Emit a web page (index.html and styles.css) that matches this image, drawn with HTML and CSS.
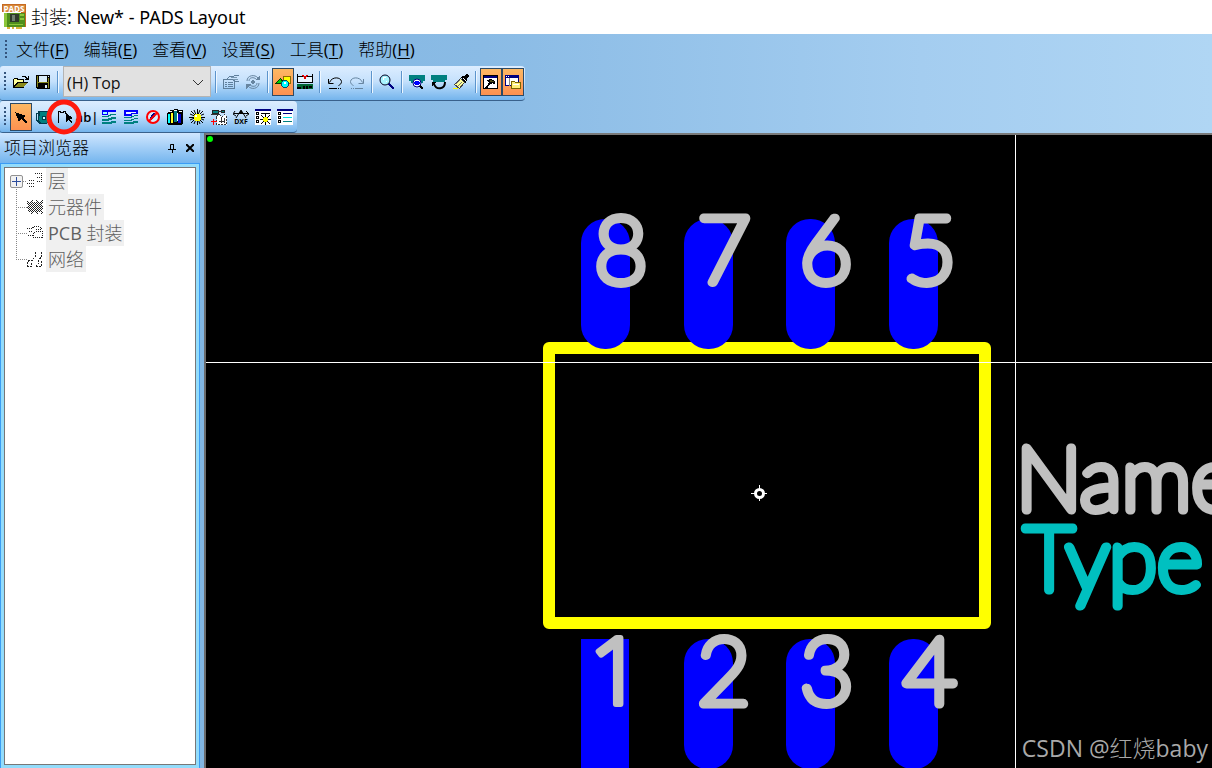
FILE: index.html
```
<!DOCTYPE html>
<html lang="zh-CN">
<head>
    <meta charset="UTF-8">
    <title>封装: New* - PADS Layout</title>
    <link rel="stylesheet" href="styles.css">
</head>
<body>
<div class="app">
    <header class="titlebar">
        <svg class="logo" width="24" height="26" viewBox="0 0 24 26">
            <path fill="#c66a22" d="M0 0h24v23h-5V8H0z"/>
            <path fill="#d98a3c" d="M1 1h22v7H1z"/>
            <path fill="#4f8f1c" d="M2 9h21v14H2z"/>
            <path fill="#8cc63a" d="M2 9h3v14H2zM18 10h4v2h-4zM18 14h4v2h-4zM7 20h14v1H7z"/>
            <path fill="#2e3a2c" d="M8 10h9v8H8z"/>
            <path fill="#6f7f70" d="M10 11h3v6h-3z"/>
            <path fill="#d9b43a" d="M5 23h3v2H5zM10 23h2v2h-2zM14 23h6v2h-6z"/>
            <text x="12" y="8" text-anchor="middle" class="logoText">PADS</text>
        </svg>
        <h1>封装: New* - PADS Layout</h1>
    </header>

    <nav class="menubar">
        <i class="grip"></i>
        <a href="#">文件(<u>F</u>)</a>
        <a href="#">编辑(<u>E</u>)</a>
        <a href="#">查看(<u>V</u>)</a>
        <a href="#">设置(<u>S</u>)</a>
        <a href="#">工具(<u>T</u>)</a>
        <a href="#">帮助(<u>H</u>)</a>
    </nav>

    <div class="toolbar">
        <i class="grip"></i>
        <button aria-label="打开"><svg viewBox="0 0 16 16">
            <path fill="#000" d="M9 2h4v1H9zM13 3h1v1h1V2h1v4h-4V5h1V4h-1V3zM1 4h4v1h6v3h4v1h-1v1h-1v1h-1v1h-1v2H0V5h1z"/>
            <path fill="#ffff9a" d="M1 5h3v1h6v2H4v1H3v1H2v1H1z"/>
            <path fill="#8a8a1a" d="M5 9h9l-3 4H2z"/>
        </svg></button>
        <button aria-label="保存"><svg viewBox="0 0 16 16">
            <path fill="#000" d="M1 1h14v14H2l-1-1z"/>
            <path fill="#85851c" d="M2 2h1v11H2zM13 4h1v10h-1zM3 8h10v1H3z"/>
            <path fill="#d8ebf8" d="M4 2h8v6H4zM10 11h2v3h-2zM13 2h1v1h-1z"/>
        </svg></button>
        <i class="sep"></i>
        <div class="layer">
            <select aria-label="层"><option>(H) Top</option></select>
            <svg viewBox="0 0 12 8"><path fill="none" stroke="#333" d="M1 1l5 5 5-5"/></svg>
        </div>
        <i class="sep"></i>
        <button aria-label="特性"><svg viewBox="0 0 16 16">
            <path fill="none" stroke="#5f7f9c" d="M.5 5.500h11v9H.5zM2 8.500h2M5 8.500h5M2 10.500h2M5 10.500h5M2 12.500h2M5 12.500h5M4 5l3-3h4l2-1h3v6h-4l-3-2-2 1"/>
            <path fill="#7897b1" d="M8 3h6v1H8zM10 5h5v1h-5z"/>
        </svg></button>
        <button aria-label="刷新"><svg viewBox="0 0 16 16">
            <path class="smooth" fill="none" stroke="#6785a0" d="M2 7c0-6 8-7 11-3M14 9c0 6-8 7-11 3M4 7c0-4 5-4 7-2M12 9c0 4-5 4-7 2"/>
            <path fill="#6785a0" d="M15 1v5h-5zM1 15v-5h5zM7 6h2v1h1v2H9v1H7V9H6V7h1z"/>
        </svg></button>
        <i class="sep"></i>
        <button class="on" aria-label="绘图工具栏"><svg viewBox="0 0 16 16">
            <path fill="#ff0" stroke="#8a6d00" d="M8.500 2.500h7v7h-7z"/>
            <path fill="#00d000" stroke="#003c00" d="M.5 9.500L5.500 4.500l4 5z"/>
            <circle cx="10" cy="10" r="3.500" fill="#0ff" stroke="#004a70"/>
            <path fill="#fff" d="M9 8h2v2H9z"/>
        </svg></button>
        <button aria-label="设计工具栏"><svg viewBox="0 0 16 16">
            <path fill="#000" d="M0 0h1v9H0zM15 0h1v9h-1zM0 2h16v1H0zM0 8h16v1H0z"/>
            <path fill="#e8f5ff" d="M1 3h14v5H1z"/>
            <path fill="#e00000" d="M5 1h2v1H5zM9 1h2v1H9zM6 2h4v1H9v2H7V3H6z"/>
            <path fill="#063" d="M0 10h16v5H0z"/>
            <path fill="#000" d="M0 13h4v2H0zM6 12h2v3H6zM9 12h2v3H9zM12 12h3v2h-3z"/>
        </svg></button>
        <i class="sep"></i>
        <button aria-label="撤销"><svg viewBox="0 0 16 16">
            <path class="smooth" fill="none" stroke="#000" d="M2.500 8.500C5 2 14 3 14.500 7.500c0 2-1 3-3 4M1.500 5v4.500h5"/>
            <path fill="#000" d="M2 14h8v1H2zM11 14h1v1h-1zM13 14h1v1h-1z"/>
        </svg></button>
        <button aria-label="重做"><svg viewBox="0 0 16 16">
            <path class="smooth" fill="none" stroke="#6785a0" d="M13.500 8.500C11 2 2 3 1.500 7.500c0 2 1 3 3 4M14.500 5v4.500h-5"/>
            <path fill="#6785a0" d="M6 14h8v1H6zM4 14h1v1H4zM2 14h1v1H2z"/>
        </svg></button>
        <i class="sep"></i>
        <button aria-label="缩放"><svg viewBox="0 0 16 16">
            <circle class="smooth" cx="6" cy="6" r="5" fill="#a9f4ff" stroke="#002"/>
            <path fill="#fff" d="M4 3h3v1H5v2H4zM7 7h1v1H7z"/>
            <path stroke="#000080" stroke-width="2" d="M10 10l5 5"/>
        </svg></button>
        <i class="sep"></i>
        <button aria-label="查看板"><svg viewBox="0 0 16 16">
            <path fill="#008080" d="M0 1h16v6h-2v2H2V7H0z"/>
            <circle class="smooth" cx="8" cy="9" r="4" fill="#fff" stroke="#000080"/>
            <path fill="#00f" d="M6 7h4v1h1v2h-1v1H6v-1H5V8h1z"/>
            <path stroke="#000" stroke-width="2" d="M11 12l3 3"/>
        </svg></button>
        <button aria-label="刷新视图"><svg viewBox="0 0 16 16">
            <path fill="#008080" d="M0 1h16v5h-2v2H2V6H0z"/>
            <path class="smooth" fill="none" stroke="#000" stroke-width="2" d="M3 10c2 6 11 6 11-2"/>
            <path fill="#000" d="M1 12V8h4z"/>
        </svg></button>
        <button aria-label="重画"><svg viewBox="0 0 16 16">
            <path fill="#ffff9a" stroke="#444" d="M7.500 4.500l4 4-5 6-5-4z"/>
            <path fill="#fff" stroke="#000" d="M8.500 3.500l2-1 3 3-1 3z"/>
            <path stroke="#000" stroke-width="3" d="M11 5l4-4"/>
            <path stroke="#777" d="M3 10l4-4M5 12l4-4"/>
            <path fill="#ff0" d="M0 14h5v1H0z"/>
        </svg></button>
        <i class="sep"></i>
        <button class="on" aria-label="输出窗口"><svg viewBox="0 0 16 16">
            <path fill="#fff" stroke="#000" d="M.5 1.500h14v13H.5z"/>
            <path fill="#000080" d="M1 2h13v2H1z"/>
            <path fill="#4b4b18" stroke="#000" d="M4.500 6.500l4-1 3 2v2l-2-1-1 1z"/>
            <path stroke="#000" stroke-width="2" d="M8 8l-6 7"/>
        </svg></button>
        <button class="on" aria-label="项目浏览器"><svg viewBox="0 0 16 16">
            <path fill="#fff" stroke="#000080" d="M.5 1.500h13v10H.5z"/>
            <path fill="#000080" d="M1 2h13v2H1z"/>
            <path fill="#fff" d="M1 2h1v1H1zM3 2h1v1H3z"/>
            <path stroke="#888" d="M4.500 4v8"/>
            <path fill="#ffef7a" stroke="#7a6400" d="M6.500 7.500h3l1 1h5v6h-9z"/>
            <path stroke="#fff" d="M8 10.500h6"/>
        </svg></button>
    </div>

    <div class="toolbar short">
        <i class="grip"></i>
        <button class="on" aria-label="选择"><svg viewBox="0 0 16 16">
            <path fill="#000" d="M2 3l11 4-3 2 4 4v1h-2l-4-4-2 3z"/>
        </svg></button>
        <button aria-label="端点"><svg viewBox="0 0 16 16">
            <path fill="#008080" stroke="#003c50" d="M4.500 2.500h10v9l-3 3h-5l-3-3z"/>
            <circle cx="9" cy="9" r="2" fill="#bfffff" stroke="#003c50"/>
            <path fill="none" stroke="#003c50" d="M1.500 5v6l4 4M1 4.500h3M3.500 2v5"/>
        </svg></button>
        <button class="marked" aria-label="2D 线"><svg viewBox="0 0 16 16">
            <path fill="none" stroke="#000" d="M1.500 14V2.500h2v1h3v-1h2v2"/>
            <path fill="#000" d="M9 4l7 5-3 1 2 3-1 1-2-3-3 2z"/>
        </svg><svg class="ring" viewBox="0 0 36 36"><circle cx="18" cy="18" r="15"/></svg></button>
        <button class="abl" aria-label="文本">ab|</button>
        <button aria-label="铜箔"><svg viewBox="0 0 16 16">
            <path fill="#00f" d="M1 1h14v2H7v3H1z"/><path fill="#9fffff" d="M2 3h4v2H2z"/>
            <path fill="#008080" d="M9 5h6v1H10v1H8v1H1V7h6V6h2zM10 8h5v2h-4v1H8v1H1v-2h6V9h3zM11 12h4v2h-4v1H1v-2h9v-1z"/>
        </svg></button>
        <button aria-label="挖空铜箔"><svg viewBox="0 0 16 16">
            <path fill="#00f" d="M1 1h14v4H9v2H1z"/><path fill="#e8f5ff" d="M3 3h10v1H8v1H3z"/>
            <path fill="#008080" d="M11 6h4v1h-4v1H9v1H1V8h7V7h3zM11 9h4v1h-4v1H9v1H1v-1h7v-1h3zM11 12h4v2h-4v1H1v-2h9v-1z"/>
        </svg></button>
        <button aria-label="禁止区域"><svg viewBox="0 0 16 16">
            <circle class="smooth" cx="8" cy="8" r="6" fill="#d7ecff" stroke="#f00" stroke-width="2"/>
            <path fill="#008" d="M8 4h2v3L7 11H5V9z"/>
            <path class="smooth" stroke="#f00" stroke-width="2" d="M4 12l8-8"/>
        </svg></button>
        <button aria-label="库"><svg viewBox="0 0 16 16">
            <path fill="#000" d="M0 4l3-3h3l1-1h4v1h5v13l-2 2H1l-1-1z"/>
            <path fill="#0ff" d="M1 5h2v9H1z"/><path fill="#ffff20" d="M4 4h2v10H4z"/>
            <path fill="#008080" d="M7 2h3v11H7z"/><path fill="#00c" d="M11 5h3v9h-3z"/>
            <path fill="#fff" d="M7 1h3v1H7zM12 2h3v1h-3zM2 2h3v1H2zM10 4h1v8h-1z"/>
        </svg></button>
        <button aria-label="向导"><svg viewBox="0 0 16 16">
            <path class="smooth" stroke="#000" d="M8.500 0v16M0 8.500h16M2 2l12 12M14 2L2 14M5 1l6 14M11 1L5 15M1 5l14 6M1 11l14-6"/>
            <path fill="#ff0" d="M6 5h5v1h1v5h-1v1H6v-1H5V6h1z"/><path fill="#fff" d="M6 6h2v2H6z"/>
        </svg></button>
        <button aria-label="图形"><svg viewBox="0 0 16 16">
            <path fill="#fff" stroke="#333" stroke-dasharray="2 1" d="M5.500 7.500l3-2 3 2 2-2 2 2v8h-10z"/>
            <path fill="#008080" stroke="#222" d="M1.500 1.500h6v3h-6zM10.500 1.500h3v2h-3z"/>
            <path stroke="#333" d="M0 5.500h8M7 2.500h4M10.500 8v6M13.500 9v5M8 12.500h5"/>
            <path stroke="#f00" d="M0 12.500h6M2.500 10v6"/>
        </svg></button>
        <button aria-label="导入 DXF"><svg viewBox="0 0 16 16">
            <path class="smooth" fill="none" stroke="#000" d="M1 4.500h14M8 1L3 9M8 1l5 8M2 2L0 5l3 2M13 2l3 3-3 2"/>
            <circle cx="8" cy="3" r="1" fill="#fff" stroke="#000"/>
            <text x="8" y="15" text-anchor="middle" class="dxf">DXF</text>
        </svg></button>
        <button aria-label="选项向导"><svg viewBox="0 0 16 16">
            <path fill="#fff" d="M0 0h16v16H0z"/><path fill="#000080" d="M0 0h16v2H0z"/>
            <path fill="none" stroke="#000" d="M1.500 3.500h2v2h-2zM1.500 7.500h2v2h-2zM1.500 11.500h2v2h-2zM6 4.500h9"/>
            <path class="smooth" stroke="#000" d="M6 6l9 9M15 6l-9 9M10.500 5v11M5 10.500h11"/>
            <path fill="#ff0" d="M9 8h3v1h1v3h-1v1H9v-1H8V9h1z"/>
        </svg></button>
        <button aria-label="选项"><svg viewBox="0 0 16 16">
            <path fill="#fff" d="M0 0h16v16H0z"/><path fill="#000080" d="M0 0h16v2H0z"/>
            <path fill="none" stroke="#000" d="M1.500 3.500h2v2h-2zM1.500 7.500h2v2h-2zM1.500 11.500h2v2h-2z"/>
            <path stroke="#000080" d="M6 4.500h9"/><path stroke="#00dede" d="M6 8.500h9"/><path stroke="#008080" d="M6 12.500h9"/>
        </svg></button>
    </div>

    <main class="work">
        <aside class="explorer">
            <div class="head">
                <h2>项目浏览器</h2>
                <button aria-label="固定"><svg width="8" height="10" viewBox="0 0 8 10"><path fill="none" stroke="#000" d="M2.500 6V1.500h3V6M0 6.500h8M4.500 7v3M5.500 1v5"/></svg></button>
                <button aria-label="关闭"><svg width="8" height="8" viewBox="0 0 8 8"><path stroke="#000" stroke-width="2" d="M0 0l8 8M8 0L0 8"/></svg></button>
            </div>
            <ul class="tree">
                <li class="root"><button class="plus" aria-label="展开"></button>
                    <svg viewBox="0 0 16 16"><path stroke="#222" stroke-dasharray="1 1" d="M8 .5h6M10 4.500h3M2 7.500h6M0 10.500h7M2 13.500h6M10 8.500h3M14.500 0v9"/></svg><span>层</span></li>
                <li><svg viewBox="0 0 16 16"><defs><pattern id="dots" width="2" height="2" patternUnits="userSpaceOnUse"><path fill="#222" d="M0 0h1v1H0zM1 1h1v1H1z"/></pattern></defs><path fill="url(#dots)" d="M0 2h2v1h2V1h2v2h3V1h2v2h3V1h2v4h-1v2h1v3h-1v2h1v3h-2v-2h-3v2H9v-2H6v2H4v-2H2v-1H1V9H0V7h1V5H0z"/></svg><span>元器件</span></li>
                <li><svg viewBox="0 0 16 16"><path fill="none" stroke="#222" stroke-dasharray="1 1" d="M0 3.500h5l2-2h5l3 2M2 6.500h4M1 10.500h4l2 2h8v-6H9l-3 2v3M9 4.500h6"/></svg><span>PCB 封装</span></li>
                <li><svg viewBox="0 0 16 16"><path fill="none" stroke="#222" stroke-dasharray="2 1" d="M8.500 1v4l-3 4H2.500l-2 2v4h4v-4M14.500 1v5l-3 3v3l-2 3h5V9"/></svg><span>网络</span></li>
            </ul>
        </aside>

        <section class="board">
            <svg class="canvas">
                <rect class="outline" x="343" y="213" width="436" height="275"/>
                <g class="pads">
                    <rect x="375" y="84" width="49" height="130" rx="24"/>
                    <rect x="478" y="84" width="49" height="130" rx="24"/>
                    <rect x="580" y="84" width="49" height="130" rx="24"/>
                    <rect x="683" y="84" width="49" height="130" rx="24"/>
                    <rect x="375" y="504" width="48" height="130"/>
                    <rect x="478" y="504" width="49" height="130" rx="24"/>
                    <rect x="580" y="504" width="49" height="130" rx="24"/>
                    <rect x="683" y="504" width="49" height="130" rx="24"/>
                </g>
                <g class="stroke num">
                    <text x="415" y="148">8</text>
                    <text x="518" y="148">7</text>
                    <text x="620" y="148">6</text>
                    <text x="724" y="148">5</text>
                    <text class="one" x="410" y="569">1</text>
                    <text x="518" y="569">2</text>
                    <text x="621" y="569">3</text>
                    <text x="724" y="569">4</text>
                </g>
                <text class="stroke name" x="810" y="375">Name</text>
                <text class="stroke name type" x="818" y="455">Type</text>
                <path class="origin" d="M553.500 350v16M545 358.500h16"/>
                <circle cx="553.500" cy="358.500" r="4" fill="#000" stroke="#fff" stroke-width="3"/>
                <rect x="0" y="227" width="100%" height="1" fill="#fff"/>
                <rect x="809" y="0" width="1" height="100%" fill="#fff"/>
                <circle cx="4" cy="4" r="3" fill="#0f0"/>
            </svg>
            <p class="mark">CSDN @红烧baby</p>
        </section>
    </main>
</div>
</body>
</html>
```
FILE: styles.css
```
*{
    margin:0;
    padding:0;
    box-sizing: border-box;
    list-style: none;
}
body{
    font: 17px/24px "Open Sans", "Noto Sans CJK SC Light", "Noto Sans CJK SC", sans-serif;
    color: #000;
}
button{
    border: none;
    background: none;
    font: inherit;
    color: inherit;
}
.app{
    display: flex;
    flex-direction: column;
    height: 100vh;
    overflow: hidden;
    background: linear-gradient(90deg, #7db4e1 0%, #8abbe5 40%, #a4cdf0 76%, #b0d6f4 100%);
}
.titlebar{
    display: flex;
    align-items: center;
    gap: 5px;
    flex: none;
    height: 34px;
    padding-left: 2px;
    background: #fff;
}
.titlebar h1{
    font-family: "Noto Sans", "Noto Sans CJK SC Light", "Noto Sans CJK SC", sans-serif;
    font-size: 18px;
    font-weight: 400;
}
.logoText{
    font: bold 8px "Open Sans", sans-serif;
    fill: #fff;
}
.menubar{
    display: flex;
    align-items: center;
    gap: 15px;
    flex: none;
    height: 32px;
    padding-left: 5px;
}
.menubar a{
    color: #000;
    text-decoration: none;
}
.menubar u{
    text-underline-offset: 2px;
}
.grip{
    flex: none;
    width: 2px;
    height: 20px;
    background: repeating-linear-gradient(#34547c 0 2px, transparent 2px 4px);
}
.menubar .grip{
    margin-right: -6px;
}
.toolbar{
    display: flex;
    align-items: center;
    align-self: flex-start;
    flex: none;
    height: 35px;
    padding: 0 1px 3px 4px;
    border-bottom: 1px solid #39618c;
    border-radius: 3px 4px 4px 3px;
    background: linear-gradient(#dcedff 0%, #c5e1fc 45%, #a5d0f7 65%, #74b4ec 100%);
}
.toolbar.short{
    height: 32px;
    padding: 0 1px 0 4px;
}
.toolbar .grip{
    margin-right: 4px;
}
.toolbar button{
    display: flex;
    align-items: center;
    justify-content: center;
    position: relative;
    width: 22px;
    height: 28px;
}
.toolbar svg{
    flex: none;
    width: 16px;
    height: 16px;
    shape-rendering: crispEdges;
}
.toolbar .smooth{
    shape-rendering: auto;
}
.toolbar .on{
    border: 1px solid #2c4a66;
    background: linear-gradient(#fdb863, #fd9150);
}
.toolbar .sep{
    width: 2px;
    height: 22px;
    margin: 0 3px;
    border-left: 1px solid #5c94cc;
    border-right: 1px solid #eef7ff;
}
.layer{
    position: relative;
    width: 148px;
    height: 31px;
    margin: 0 1px;
}
.layer select{
    width: 100%;
    height: 100%;
    padding: 3px 24px 0 3px;
    appearance: none;
    border: 1px solid #b4b4b4;
    border-radius: 0;
    font: 16px/24px "Open Sans", sans-serif;
    color: #111;
    background: #e1e1e1;
}
.layer svg{
    position: absolute;
    right: 7px;
    top: 13px;
    width: 12px;
    height: 8px;
    shape-rendering: auto;
    pointer-events: none;
}
.toolbar .abl{
    font-size: 13px;
    font-weight: 600;
}
.dxf{
    font: bold 7px "Open Sans", sans-serif;
}
.toolbar .ring{
    position: absolute;
    left: -8px;
    top: -4px;
    z-index: 2;
    width: 36px;
    height: 36px;
    shape-rendering: auto;
}
.ring circle{
    fill: none;
    stroke: #ff1a0d;
    stroke-width: 5px;
}
.work{
    display: flex;
    flex: 1;
    min-height: 0;
}
.explorer{
    display: flex;
    flex-direction: column;
    flex: none;
    width: 200px;
}
.explorer .head{
    display: flex;
    align-items: center;
    gap: 8px;
    height: 30px;
    padding: 0 5px 0 4px;
    background: linear-gradient(#cfe6ff, #74b5ee);
}
.head h2{
    flex: 1;
    font-size: 17px;
    font-weight: 400;
}
.head button{
    display: flex;
    padding: 1px;
}
.tree{
    flex: 1;
    padding: 4px 0 0 4px;
    border: 1px solid #3b9df5;
    border-bottom: none;
    background: #fff;
    box-shadow: inset 0 0 0 3px #93dcfb, inset 0 0 0 4px #777;
}
.tree li{
    display: flex;
    align-items: center;
    position: relative;
    height: 26px;
    padding-left: 22px;
    font-size: 18px;
    color: #606060;
}
.tree li::before{
    content: "";
    position: absolute;
    left: 11px;
    top: 0;
    width: 10px;
    height: 13px;
    border-left: 1px dotted #888;
    border-bottom: 1px dotted #888;
}
.tree .root::before{
    border-left: none;
}
.tree svg{
    width: 16px;
    height: 16px;
    margin-right: 3px;
    shape-rendering: crispEdges;
}
.tree li:not(.root)::before{
    top: -13px;
    height: 26px;
}
.tree span{
    padding: 0 2px;
    line-height: 26px;
    background: #f0f0f0;
}
.tree .plus{
    position: absolute;
    left: 5px;
    top: 7px;
    z-index: 1;
    width: 13px;
    height: 13px;
    border: 1px solid #919191;
    border-radius: 2px;
    background:
        linear-gradient(#2d4d9c, #2d4d9c) center / 9px 1px no-repeat,
        linear-gradient(#2d4d9c, #2d4d9c) center / 1px 9px no-repeat,
        #f2f2f2;
}
.board{
    flex: 1;
    position: relative;
    min-width: 0;
    margin: 0 0 0 4px;
    border-left: 2px solid #6c6c6c;
    border-top: 2px solid #7a7a7a;
    background: #000;
}
.canvas{
    display: block;
    width: 100%;
    height: 100%;
}
.outline{
    fill: none;
    stroke: #ff0;
    stroke-width: 12px;
    stroke-linejoin: round;
}
.pads{
    fill: #00f;
}
.stroke{
    font: 100 92px Lato, "Open Sans", sans-serif;
    fill: #c0c0c0;
    stroke: #c0c0c0;
    stroke-width: 9px;
    stroke-linejoin: round;
    stroke-linecap: round;
}
.num{
    text-anchor: middle;
}
.num .one{
    font-family: "Open Sans", sans-serif;
    font-weight: 300;
    stroke-width: 6px;
}
.name{
    font-size: 88px;
}
.type{
    fill: #00c0c0;
    stroke: #00c0c0;
}
.origin{
    stroke: #fff;
    stroke-width: 1px;
}
.mark{
    position: absolute;
    right: 4px;
    bottom: 8px;
    font-size: 23px;
    color: #a9a9a9;
}
```
